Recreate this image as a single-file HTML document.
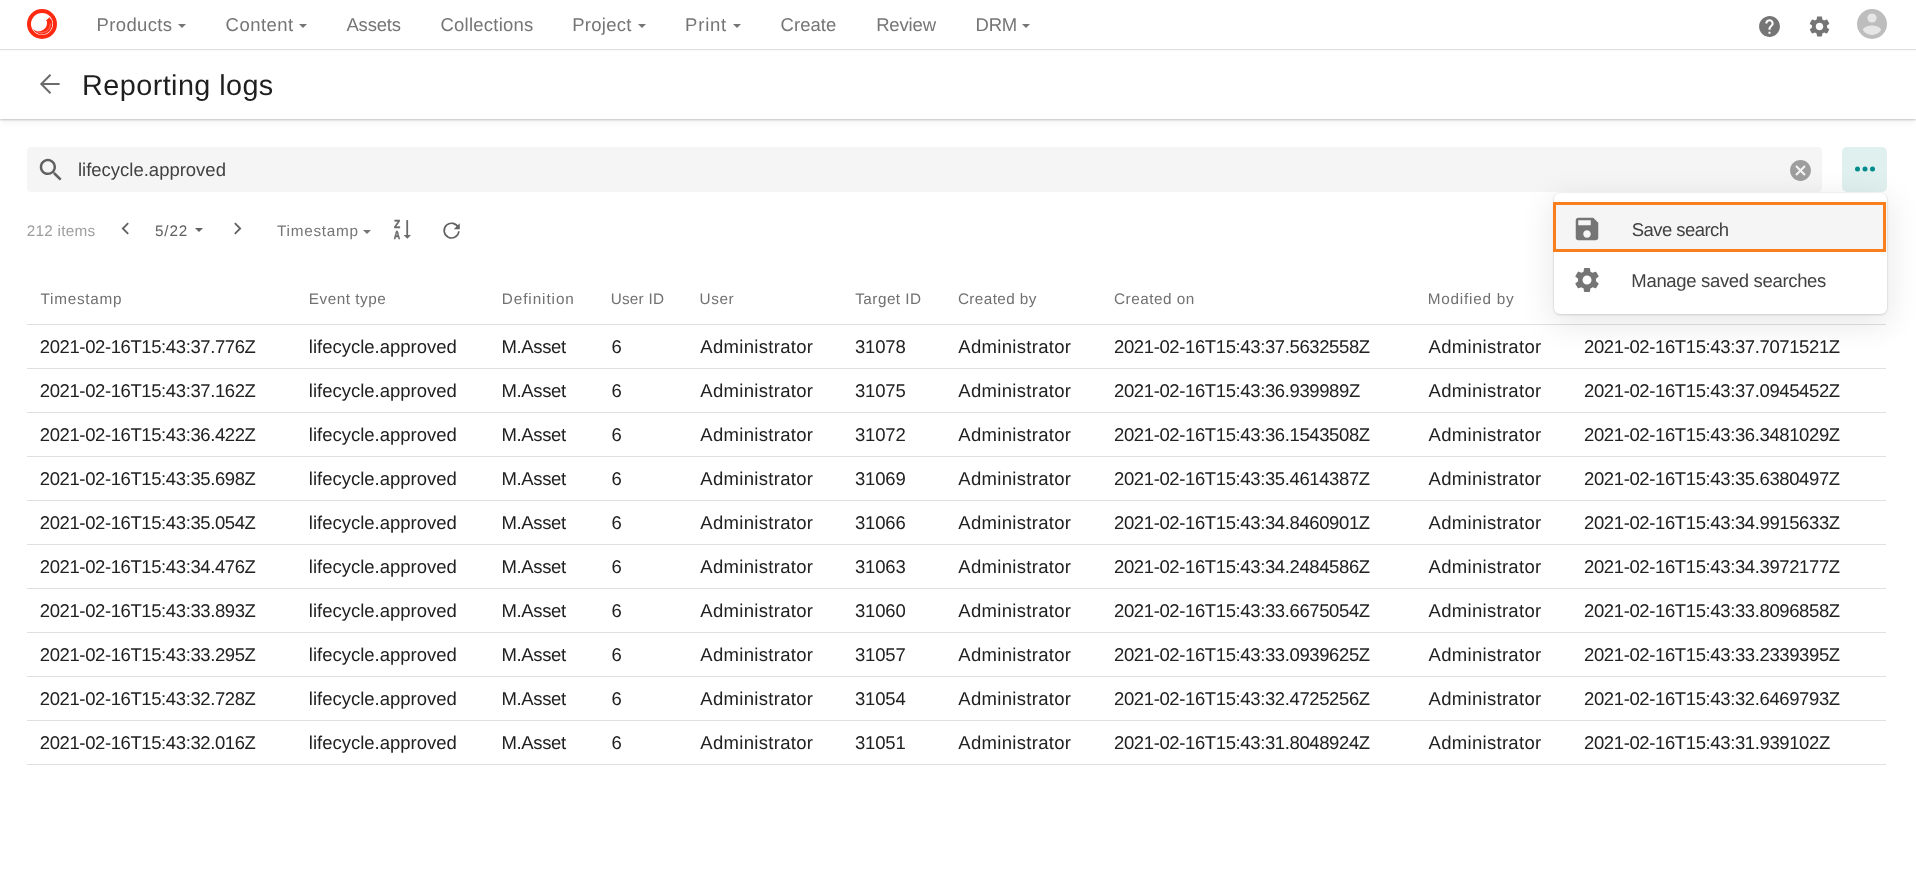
<!DOCTYPE html>
<html lang="en">
<head>
<meta charset="utf-8">
<title>Reporting logs</title>
<style>
*{box-sizing:border-box;margin:0;padding:0}
html,body{width:1916px;height:878px;overflow:hidden;background:#fff}
body{text-rendering:geometricPrecision;font-family:"Liberation Sans",sans-serif;color:#212121;position:relative;-webkit-font-smoothing:antialiased}
#root{position:absolute;left:0;top:0;width:1916px;height:878px;will-change:transform}
.abs{position:absolute}
.t{position:absolute;white-space:nowrap;line-height:1}
svg{display:block}

/* top navigation */
#nav{position:absolute;left:0;top:0;width:1916px;height:50px;background:#fff;border-bottom:1px solid #e0e0e0;z-index:3}
.nv{font-size:18.5px;color:#757575;top:16px}
.caret{position:absolute;width:0;height:0;border-left:4.5px solid transparent;border-right:4.5px solid transparent;border-top:4.5px solid #757575}

/* title bar */
#titlebar{position:absolute;left:0;top:50px;width:1916px;height:69px;background:#fff;box-shadow:0 1px 2px rgba(0,0,0,.22),0 3px 8px rgba(0,0,0,.05);z-index:2}
#navsh{position:absolute;left:0;top:50px;width:1916px;height:1px;background:#f8f8f8;z-index:3}
#title{font-size:28.8px;color:#1f1f1f;left:82.2px;top:22px}

/* search */
#search{position:absolute;left:27px;top:147px;width:1795px;height:45px;background:#f5f5f5;border-radius:4px}
#q{font-size:18.5px;color:#424242;left:51px;top:14px}
#more{position:absolute;left:1842px;top:147px;width:45px;height:45px;background:#dff0ef;border-radius:5px}

/* toolbar */
.tb{font-size:15.3px;top:224px}

/* table */
.hl{position:absolute;left:27px;width:1859px;height:1px;background:#e0e0e0}
.th{font-size:15.3px;color:#717171;top:292px}
.row{position:absolute;left:0;width:1916px;height:44px}
.td{font-size:18.5px;color:#212121;top:14px}

/* dropdown */
#menu{position:absolute;left:1554px;top:193px;width:333px;height:120.500px;background:#fff;border-radius:6px;box-shadow:0 0 0 .5px rgba(0,0,0,.06),0 1px 3px rgba(0,0,0,.13),0 8px 32px 4px rgba(0,0,0,.085)}
#hover{position:absolute;left:1554px;top:202px;width:333px;height:50px;background:#f5f5f5}
#focus{position:absolute;left:1553px;top:202px;width:333px;height:50px;border:3px solid #f97f1e}
.mi{font-size:18.5px;color:#424242;left:1631.6px}

/*CAL*/
#n1{letter-spacing:0.34px;margin-left:-0.40px}
#n2{letter-spacing:0.46px;margin-left:0.09px}
#n3{letter-spacing:-0.22px;margin-left:-0.51px}
#n4{letter-spacing:0.23px;margin-left:0.49px}
#n5{letter-spacing:0.30px;margin-left:-0.47px}
#n6{letter-spacing:0.77px;margin-left:-0.60px}
#n7{letter-spacing:0.07px;margin-left:0.49px}
#n8{letter-spacing:-0.15px;margin-left:-0.47px}
#n9{letter-spacing:-0.25px;margin-left:-0.40px}
#title{letter-spacing:0.42px;margin-left:-0.08px}
#q{letter-spacing:-0.01px;margin-left:0.03px}
#items{letter-spacing:0.27px;margin-left:0.24px}
#page{letter-spacing:0.83px;margin-left:0.00px}
#sort{letter-spacing:0.74px;margin-left:-0.01px}
.hc0{letter-spacing:0.72px;margin-left:-0.11px}
.hc1{letter-spacing:0.52px;margin-left:-0.15px}
.hc2{letter-spacing:0.92px;margin-left:-0.21px}
.hc3{letter-spacing:0.23px;margin-left:-0.31px}
.hc4{letter-spacing:0.58px;margin-left:0.07px}
.hc5{letter-spacing:0.47px;margin-left:-0.75px}
.hc6{letter-spacing:0.41px;margin-left:-0.12px}
.hc7{letter-spacing:0.50px;margin-left:0.00px}
.hc8{letter-spacing:0.77px;margin-left:-0.21px}
.c0{letter-spacing:-0.40px;margin-left:-0.20px}
.c1{letter-spacing:-0.01px;margin-left:-0.16px}
.c2{letter-spacing:-0.40px;margin-left:-0.40px}
.c3{letter-spacing:0.00px;margin-left:0.16px}
.c4{letter-spacing:0.30px;margin-left:-0.15px}
.c5{letter-spacing:-0.14px;margin-left:-1.11px}
.c6{letter-spacing:0.31px;margin-left:-0.76px}
.c7{letter-spacing:-0.38px;margin-left:0.00px}
.c8{letter-spacing:0.30px;margin-left:-0.45px}
.c9{letter-spacing:-0.38px;margin-left:0.00px}
#m1{letter-spacing:-0.55px;margin-left:0.16px}
#m2{letter-spacing:-0.33px;margin-left:-0.25px}
.hc9{letter-spacing:0.77px}
/*ENDCAL*/
</style>
</head>
<body>
<div id="root">

<!-- NAV -->
<div id="nav">
  <svg class="abs" style="left:26px;top:8px" width="32" height="32" viewBox="0 0 32 32">
    <circle cx="16" cy="16" r="15" fill="#fe2911"/>
    <circle cx="16" cy="16" r="11" fill="#fff"/>
    <path d="M25.18 11.12A10.4 10.4 0 1 1 6.73 20.72A8.34 8.34 0 0 0 20.70 12.41Z" fill="#fe2911"/>
    <path d="M19.600 12.900L23.500 9.200L25.400 12.400Z" fill="#fe2911"/>
    <path d="M24.300 15.500A8.900 8.900 0 0 1 10.500 23.400" fill="none" stroke="#fff" stroke-width=".45" opacity=".8"/>
  </svg>
  <span class="t nv" id="n1" style="left:97px">Products</span><i class="caret" style="left:178px;top:24px"></i>
  <span class="t nv" id="n2" style="left:225.5px">Content</span><i class="caret" style="left:299px;top:24px"></i>
  <span class="t nv" id="n3" style="left:347px">Assets</span>
  <span class="t nv" id="n4" style="left:440px">Collections</span>
  <span class="t nv" id="n5" style="left:572.6px">Project</span><i class="caret" style="left:638px;top:24px"></i>
  <span class="t nv" id="n6" style="left:685.7px">Print</span><i class="caret" style="left:733px;top:24px"></i>
  <span class="t nv" id="n7" style="left:780px">Create</span>
  <span class="t nv" id="n8" style="left:876.6px">Review</span>
  <span class="t nv" id="n9" style="left:976px">DRM</span><i class="caret" style="left:1022px;top:24px"></i>

  <!-- help -->
  <svg class="abs" style="left:1757px;top:14px" width="25" height="25" viewBox="0 0 24 24"><path fill="#757575" d="M12 2C6.48 2 2 6.48 2 12s4.48 10 10 10 10-4.48 10-10S17.52 2 12 2zm1 17h-2v-2h2v2zm2.070-7.750l-.9.920C13.450 12.900 13 13.500 13 15h-2v-.500c0-1.100.450-2.100 1.170-2.830l1.240-1.260c.370-.360.590-.860.590-1.410 0-1.100-.900-2-2-2s-2 .900-2 2H8c0-2.210 1.790-4 4-4s4 1.790 4 4c0 .880-.360 1.680-.930 2.250z"/></svg>
  <!-- settings -->
  <svg class="abs" style="left:1807px;top:14px" width="25" height="25" viewBox="0 0 24 24"><path fill="#757575" d="M19.140 12.940c.040-.300.060-.610.060-.940 0-.320-.020-.640-.070-.940l2.030-1.580c.180-.140.230-.410.120-.610l-1.920-3.320c-.120-.220-.370-.290-.590-.220l-2.390.960c-.500-.380-1.030-.700-1.620-.940l-.360-2.540c-.040-.240-.240-.410-.480-.410h-3.840c-.240 0-.430.170-.470.410l-.360 2.540c-.590.240-1.130.570-1.620.940l-2.390-.960c-.220-.080-.470 0-.590.220L2.740 8.870c-.120.210-.080.470.120.610l2.030 1.580c-.050.300-.090.630-.090.940s.020.640.070.940l-2.030 1.580c-.180.140-.230.410-.120.610l1.920 3.320c.120.220.370.290.590.220l2.390-.960c.500.380 1.030.700 1.620.940l.360 2.540c.050.240.240.410.480.410h3.840c.240 0 .440-.170.470-.410l.360-2.540c.590-.240 1.130-.560 1.620-.940l2.390.960c.220.080.470 0 .590-.220l1.920-3.320c.120-.220.070-.470-.120-.610l-2.010-1.580zM12 15.600c-1.980 0-3.600-1.620-3.600-3.600s1.620-3.600 3.600-3.600 3.600 1.620 3.600 3.600-1.620 3.600-3.600 3.600z"/></svg>
  <!-- avatar -->
  <svg class="abs" style="left:1857px;top:9px" width="30" height="30" viewBox="0 0 30 30">
    <defs><clipPath id="av"><circle cx="15" cy="15" r="15"/></clipPath></defs>
    <circle cx="15" cy="15" r="15" fill="#bdbdbd"/>
    <circle cx="15" cy="9" r="4.6" fill="#e6e6e6"/>
    <path d="M5.700 20.600C9 15 21 15 24.200 20.600C21 27.700 9 27.700 5.700 20.600Z" fill="#e6e6e6"/>
  </svg>
</div>

<div id="navsh"></div>
<!-- TITLE BAR -->
<div id="titlebar">
  <svg class="abs" style="left:34px;top:18px" width="32" height="32" viewBox="0 0 32 32"><path d="M25.6 16H7.600M16.500 6.700L7.300 16l9.200 9.300" fill="none" stroke="#6b6b6b" stroke-width="2"/></svg>
  <span class="t" id="title">Reporting logs</span>
</div>

<!-- SEARCH -->
<div id="search">
  <svg class="abs" style="left:8.900px;top:8.200px" width="30" height="30" viewBox="0 0 24 24"><path fill="#616161" d="M15.500 14h-.790l-.280-.270C15.410 12.590 16 11.110 16 9.500 16 5.910 13.090 3 9.500 3S3 5.910 3 9.500 5.910 16 9.500 16c1.610 0 3.090-.590 4.230-1.570l.270.280v.790l5 4.990L20.490 19l-4.990-5zm-6 0C7.010 14 5 11.990 5 9.500S7.010 5 9.500 5 14 7.010 14 9.500 11.990 14 9.500 14z"/></svg>
  <span class="t" id="q">lifecycle.approved</span>
  <svg class="abs" style="left:1761px;top:11px" width="25" height="25" viewBox="0 0 24 24"><path fill="#9e9e9e" d="M12 2C6.470 2 2 6.470 2 12s4.470 10 10 10 10-4.470 10-10S17.530 2 12 2zm5 13.590L15.590 17 12 13.410 8.410 17 7 15.590 10.590 12 7 8.410 8.410 7 12 10.590 15.590 7 17 8.410 13.410 12 17 15.590z"/></svg>
</div>
<div id="more">
  <svg class="abs" style="left:7.600px;top:7px" width="30" height="30" viewBox="0 0 24 24"><g fill="#008c8a"><circle cx="6" cy="12" r="2"/><circle cx="12" cy="12" r="2"/><circle cx="18" cy="12" r="2"/></g></svg>
</div>

<!-- TOOLBAR -->
<span class="t tb" id="items" style="left:26.5px;color:#9e9e9e">212 items</span>
<svg class="abs" style="left:114px;top:217.400px" width="23" height="23" viewBox="0 0 24 24"><path d="M14.800 6.400L9.200 12l5.600 5.600" fill="none" stroke="#616161" stroke-width="1.900"/></svg>
<span class="t tb" id="page" style="left:155px;color:#616161">5/22</span><i class="caret" style="left:194.500px;top:228px;border-top-color:#616161;border-width:4.500px 4.200px 0 4.200px"></i>
<svg class="abs" style="left:226px;top:217.400px" width="23" height="23" viewBox="0 0 24 24"><path d="M9.200 6.400L14.800 12l-5.600 5.600" fill="none" stroke="#616161" stroke-width="1.900"/></svg>
<span class="t tb" id="sort" style="left:277px;color:#757575">Timestamp</span><i class="caret" style="left:363px;top:230px;border-width:4.200px 4.200px 0 4.200px"></i>
<!-- sort Z-A icon -->
<svg class="abs" style="left:392px;top:219px" width="22" height="22" viewBox="0 0 22 22">
  <g font-family="Liberation Sans, sans-serif" font-weight="700" font-size="11.600" fill="#6a6a6a" stroke="#6a6a6a" stroke-width=".45">
  <text transform="translate(2 9.050) scale(.88 1)">Z</text>
  <text transform="translate(1.700 19.850) scale(.76 1)">A</text>
  </g>
  <path d="M15.200 1.100V17" fill="none" stroke="#6a6a6a" stroke-width="1.800"/>
  <path d="M11.600 15.900h7.400l-3.700 3.900z" fill="#6a6a6a"/>
</svg>
<!-- refresh -->
<svg class="abs" style="left:439.600px;top:219px" width="23" height="23" viewBox="0 0 24 24">
  <path d="M19.200 9.300A7.700 7.700 0 1 0 19.700 12.800" fill="none" stroke="#616161" stroke-width="1.700"/>
  <path d="M20.600 4.400v6.200h-6.200z" fill="#616161"/>
</svg>

<!-- TABLE -->
<div id="table">
  <span class="t th hc0" style="left:40.7px">Timestamp</span>
  <span class="t th hc1" style="left:309px">Event type</span>
  <span class="t th hc2" style="left:502px">Definition</span>
  <span class="t th hc3" style="left:611px">User ID</span>
  <span class="t th hc4" style="left:699.5px">User</span>
  <span class="t th hc5" style="left:856px">Target ID</span>
  <span class="t th hc6" style="left:958px">Created by</span>
  <span class="t th hc7" style="left:1114px">Created on</span>
  <span class="t th hc8" style="left:1428px">Modified by</span>
  <span class="t th hc9" style="left:1584px">Modified on</span>
  <div class="hl" style="top:324px"></div>
  <div class="row" style="top:324px">
    <span class="t td c0" style="left:40px">2021-02-16T15:43:37.776Z</span>
    <span class="t td c1" style="left:309px">lifecycle.approved</span>
    <span class="t td c2" style="left:502px">M.Asset</span>
    <span class="t td c3" style="left:611.4px">6</span>
    <span class="t td c4" style="left:700.5px">Administrator</span>
    <span class="t td c5" style="left:856px">31078</span>
    <span class="t td c6" style="left:959px">Administrator</span>
    <span class="t td c7" style="left:1114px">2021-02-16T15:43:37.5632558Z</span>
    <span class="t td c8" style="left:1429px">Administrator</span>
    <span class="t td c9" style="left:1584px">2021-02-16T15:43:37.7071521Z</span>
  </div>
  <div class="hl" style="top:368px"></div>
  <div class="row" style="top:368px">
    <span class="t td c0" style="left:40px">2021-02-16T15:43:37.162Z</span>
    <span class="t td c1" style="left:309px">lifecycle.approved</span>
    <span class="t td c2" style="left:502px">M.Asset</span>
    <span class="t td c3" style="left:611.4px">6</span>
    <span class="t td c4" style="left:700.5px">Administrator</span>
    <span class="t td c5" style="left:856px">31075</span>
    <span class="t td c6" style="left:959px">Administrator</span>
    <span class="t td c7" style="left:1114px">2021-02-16T15:43:36.939989Z</span>
    <span class="t td c8" style="left:1429px">Administrator</span>
    <span class="t td c9" style="left:1584px">2021-02-16T15:43:37.0945452Z</span>
  </div>
  <div class="hl" style="top:412px"></div>
  <div class="row" style="top:412px">
    <span class="t td c0" style="left:40px">2021-02-16T15:43:36.422Z</span>
    <span class="t td c1" style="left:309px">lifecycle.approved</span>
    <span class="t td c2" style="left:502px">M.Asset</span>
    <span class="t td c3" style="left:611.4px">6</span>
    <span class="t td c4" style="left:700.5px">Administrator</span>
    <span class="t td c5" style="left:856px">31072</span>
    <span class="t td c6" style="left:959px">Administrator</span>
    <span class="t td c7" style="left:1114px">2021-02-16T15:43:36.1543508Z</span>
    <span class="t td c8" style="left:1429px">Administrator</span>
    <span class="t td c9" style="left:1584px">2021-02-16T15:43:36.3481029Z</span>
  </div>
  <div class="hl" style="top:456px"></div>
  <div class="row" style="top:456px">
    <span class="t td c0" style="left:40px">2021-02-16T15:43:35.698Z</span>
    <span class="t td c1" style="left:309px">lifecycle.approved</span>
    <span class="t td c2" style="left:502px">M.Asset</span>
    <span class="t td c3" style="left:611.4px">6</span>
    <span class="t td c4" style="left:700.5px">Administrator</span>
    <span class="t td c5" style="left:856px">31069</span>
    <span class="t td c6" style="left:959px">Administrator</span>
    <span class="t td c7" style="left:1114px">2021-02-16T15:43:35.4614387Z</span>
    <span class="t td c8" style="left:1429px">Administrator</span>
    <span class="t td c9" style="left:1584px">2021-02-16T15:43:35.6380497Z</span>
  </div>
  <div class="hl" style="top:500px"></div>
  <div class="row" style="top:500px">
    <span class="t td c0" style="left:40px">2021-02-16T15:43:35.054Z</span>
    <span class="t td c1" style="left:309px">lifecycle.approved</span>
    <span class="t td c2" style="left:502px">M.Asset</span>
    <span class="t td c3" style="left:611.4px">6</span>
    <span class="t td c4" style="left:700.5px">Administrator</span>
    <span class="t td c5" style="left:856px">31066</span>
    <span class="t td c6" style="left:959px">Administrator</span>
    <span class="t td c7" style="left:1114px">2021-02-16T15:43:34.8460901Z</span>
    <span class="t td c8" style="left:1429px">Administrator</span>
    <span class="t td c9" style="left:1584px">2021-02-16T15:43:34.9915633Z</span>
  </div>
  <div class="hl" style="top:544px"></div>
  <div class="row" style="top:544px">
    <span class="t td c0" style="left:40px">2021-02-16T15:43:34.476Z</span>
    <span class="t td c1" style="left:309px">lifecycle.approved</span>
    <span class="t td c2" style="left:502px">M.Asset</span>
    <span class="t td c3" style="left:611.4px">6</span>
    <span class="t td c4" style="left:700.5px">Administrator</span>
    <span class="t td c5" style="left:856px">31063</span>
    <span class="t td c6" style="left:959px">Administrator</span>
    <span class="t td c7" style="left:1114px">2021-02-16T15:43:34.2484586Z</span>
    <span class="t td c8" style="left:1429px">Administrator</span>
    <span class="t td c9" style="left:1584px">2021-02-16T15:43:34.3972177Z</span>
  </div>
  <div class="hl" style="top:588px"></div>
  <div class="row" style="top:588px">
    <span class="t td c0" style="left:40px">2021-02-16T15:43:33.893Z</span>
    <span class="t td c1" style="left:309px">lifecycle.approved</span>
    <span class="t td c2" style="left:502px">M.Asset</span>
    <span class="t td c3" style="left:611.4px">6</span>
    <span class="t td c4" style="left:700.5px">Administrator</span>
    <span class="t td c5" style="left:856px">31060</span>
    <span class="t td c6" style="left:959px">Administrator</span>
    <span class="t td c7" style="left:1114px">2021-02-16T15:43:33.6675054Z</span>
    <span class="t td c8" style="left:1429px">Administrator</span>
    <span class="t td c9" style="left:1584px">2021-02-16T15:43:33.8096858Z</span>
  </div>
  <div class="hl" style="top:632px"></div>
  <div class="row" style="top:632px">
    <span class="t td c0" style="left:40px">2021-02-16T15:43:33.295Z</span>
    <span class="t td c1" style="left:309px">lifecycle.approved</span>
    <span class="t td c2" style="left:502px">M.Asset</span>
    <span class="t td c3" style="left:611.4px">6</span>
    <span class="t td c4" style="left:700.5px">Administrator</span>
    <span class="t td c5" style="left:856px">31057</span>
    <span class="t td c6" style="left:959px">Administrator</span>
    <span class="t td c7" style="left:1114px">2021-02-16T15:43:33.0939625Z</span>
    <span class="t td c8" style="left:1429px">Administrator</span>
    <span class="t td c9" style="left:1584px">2021-02-16T15:43:33.2339395Z</span>
  </div>
  <div class="hl" style="top:676px"></div>
  <div class="row" style="top:676px">
    <span class="t td c0" style="left:40px">2021-02-16T15:43:32.728Z</span>
    <span class="t td c1" style="left:309px">lifecycle.approved</span>
    <span class="t td c2" style="left:502px">M.Asset</span>
    <span class="t td c3" style="left:611.4px">6</span>
    <span class="t td c4" style="left:700.5px">Administrator</span>
    <span class="t td c5" style="left:856px">31054</span>
    <span class="t td c6" style="left:959px">Administrator</span>
    <span class="t td c7" style="left:1114px">2021-02-16T15:43:32.4725256Z</span>
    <span class="t td c8" style="left:1429px">Administrator</span>
    <span class="t td c9" style="left:1584px">2021-02-16T15:43:32.6469793Z</span>
  </div>
  <div class="hl" style="top:720px"></div>
  <div class="row" style="top:720px">
    <span class="t td c0" style="left:40px">2021-02-16T15:43:32.016Z</span>
    <span class="t td c1" style="left:309px">lifecycle.approved</span>
    <span class="t td c2" style="left:502px">M.Asset</span>
    <span class="t td c3" style="left:611.4px">6</span>
    <span class="t td c4" style="left:700.5px">Administrator</span>
    <span class="t td c5" style="left:856px">31051</span>
    <span class="t td c6" style="left:959px">Administrator</span>
    <span class="t td c7" style="left:1114px">2021-02-16T15:43:31.8048924Z</span>
    <span class="t td c8" style="left:1429px">Administrator</span>
    <span class="t td c9" style="left:1584px">2021-02-16T15:43:31.939102Z</span>
  </div>
  <div class="hl" style="top:764px"></div>
</div>

<!-- DROPDOWN MENU -->
<div id="menu"></div>
<div id="hover"></div>
<svg class="abs" style="left:1572px;top:214px" width="30" height="30" viewBox="0 0 24 24"><path fill="#757575" d="M17 3H5c-1.110 0-2 .900-2 2v14c0 1.100.890 2 2 2h14c1.100 0 2-.900 2-2V7l-4-4zm-5 16c-1.660 0-3-1.340-3-3s1.340-3 3-3 3 1.340 3 3-1.340 3-3 3zm3-10H5V5h10v4z"/></svg>
<span class="t mi" id="m1" style="top:221px">Save search</span>
<svg class="abs" style="left:1572px;top:265px" width="30" height="30" viewBox="0 0 24 24"><path fill="#757575" d="M19.140 12.940c.040-.300.060-.610.060-.940 0-.320-.020-.640-.070-.940l2.030-1.580c.180-.140.230-.410.120-.610l-1.920-3.320c-.120-.220-.370-.290-.590-.220l-2.390.960c-.500-.380-1.030-.700-1.620-.940l-.360-2.540c-.040-.240-.240-.410-.480-.410h-3.840c-.240 0-.430.170-.470.410l-.360 2.540c-.590.240-1.130.570-1.620.940l-2.390-.960c-.220-.080-.470 0-.590.220L2.740 8.870c-.120.210-.080.470.120.610l2.030 1.580c-.050.300-.090.630-.090.940s.020.640.070.940l-2.030 1.580c-.180.140-.230.410-.120.610l1.920 3.320c.120.220.370.290.590.220l2.390-.960c.500.380 1.030.700 1.620.940l.360 2.540c.050.240.240.410.480.410h3.840c.240 0 .440-.170.470-.410l.360-2.540c.590-.240 1.130-.560 1.620-.940l2.390.960c.220.080.470 0 .590-.220l1.920-3.320c.120-.220.070-.470-.120-.610l-2.010-1.580zM12 15.600c-1.980 0-3.600-1.620-3.600-3.600s1.620-3.600 3.600-3.600 3.600 1.620 3.600 3.600-1.620 3.600-3.600 3.600z"/></svg>
<span class="t mi" id="m2" style="top:272px">Manage saved searches</span>
<div id="focus"></div>

</div>
</body>
</html>
